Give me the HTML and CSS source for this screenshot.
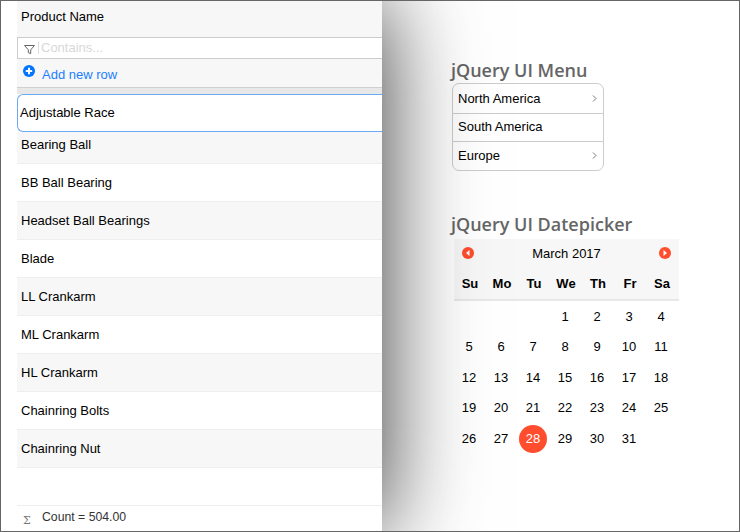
FILE: index.html
```html
<!DOCTYPE html>
<html lang="en">
<head>
<meta charset="utf-8">
<title>Components</title>
<link rel="stylesheet" href="styles.css">
</head>
<body>
<div class="window">
  <section class="panel">
    <div class="grid">
      <div class="grid-head">
        <div class="head-title">Product Name</div>
        <div class="filter">
          <svg class="filter-icon" width="11" height="11" viewBox="0 0 11 11"><path d="M0.5 1.5h10L6.7 5.8v3.9L4.3 8.6V5.8z" fill="#fff" stroke="#666" stroke-width="1"/></svg>
          <span class="filter-sep"></span>
          <span class="filter-text">Contains...</span>
        </div>
        <div class="add-row">
          <svg class="add-icon" width="12" height="12" viewBox="0 0 12 12"><circle cx="6" cy="6" r="6" fill="#0075ff"/><path d="M2.8 6h6.4M6 2.8v6.4" stroke="#fff" stroke-width="2"/></svg>
          <span class="add-text">Add new row</span>
        </div>
      </div>
      <div class="grid-gap"></div>
      <div class="grid-body">
        <div class="row selected">Adjustable Race</div>
        <div class="row alt first">Bearing Ball</div>
        <div class="row">BB Ball Bearing</div>
        <div class="row alt">Headset Ball Bearings</div>
        <div class="row">Blade</div>
        <div class="row alt">LL Crankarm</div>
        <div class="row">ML Crankarm</div>
        <div class="row alt">HL Crankarm</div>
        <div class="row">Chainring Bolts</div>
        <div class="row alt">Chainring Nut</div>
      </div>
      <div class="grid-foot">
        <span class="sigma">Σ</span>
        <span class="count">Count = 504.00</span>
      </div>
    </div>
  </section>
  <main class="side">
    <h2 class="title menu-title">jQuery UI Menu</h2>
    <ul class="menu">
      <li class="menu-item"><span>North America</span><svg width="5" height="7" viewBox="0 0 5 7"><path d="M1 .5l3 3-3 3" fill="none" stroke="#777"/></svg></li>
      <li class="menu-item"><span>South America</span></li>
      <li class="menu-item"><span>Europe</span><svg width="5" height="7" viewBox="0 0 5 7"><path d="M1 .5l3 3-3 3" fill="none" stroke="#777"/></svg></li>
    </ul>
    <h2 class="title date-title">jQuery UI Datepicker</h2>
    <div class="picker">
      <div class="picker-head">
        <div class="picker-nav">
          <svg width="12" height="12" viewBox="0 0 12 12"><circle cx="6" cy="6" r="6" fill="#ff4d2e"/><path d="M7.5 3v6L4 6z" fill="#fff"/></svg>
          <span class="month">March 2017</span>
          <svg width="12" height="12" viewBox="0 0 12 12"><circle cx="6" cy="6" r="6" fill="#ff4d2e"/><path d="M4.5 3v6L8 6z" fill="#fff"/></svg>
        </div>
        <div class="weekdays">
          <span>Su</span><span>Mo</span><span>Tu</span><span>We</span><span>Th</span><span>Fr</span><span>Sa</span>
        </div>
      </div>
      <div class="days">
        <span></span><span></span><span></span><span>1</span><span>2</span><span>3</span><span>4</span>
        <span>5</span><span>6</span><span>7</span><span>8</span><span>9</span><span>10</span><span>11</span>
        <span>12</span><span>13</span><span>14</span><span>15</span><span>16</span><span>17</span><span>18</span>
        <span>19</span><span>20</span><span>21</span><span>22</span><span>23</span><span>24</span><span>25</span>
        <span>26</span><span>27</span><span class="today">28</span><span>29</span><span>30</span><span>31</span><span></span>
      </div>
    </div>
  </main>
</div>
</body>
</html>
```
FILE: styles.css
```css
* { box-sizing: border-box; }
html, body { margin: 0; padding: 0; }
body { font-family: "Liberation Sans", Arial, sans-serif; font-size: 13px; color: #000; background: #fff; }
.window { width: 740px; height: 532px; border: 1px solid #666; display: flex; overflow: hidden; background: #fff; }
.panel { width: 381px; flex: none; padding-left: 16px; background: #fff; box-shadow: 0 0 90px rgba(0,0,0,.8); position: relative; z-index: 1; }
.grid { height: 100%; display: flex; flex-direction: column; }
.grid-head { background: #f7f7f7; height: 87px; border-bottom: 1px solid #d0d0d0; }
.head-title { height: 36px; padding: 8px 4px 0; line-height: 16px; }
.filter { height: 22px; border: 1px solid #ccc; border-right: 0; background: #fff; display: flex; align-items: center; }
.filter-icon { margin: 2px 0 0 6px; }
.filter-sep { width: 1px; height: 12px; background: #ddd; margin-left: 3px; }
.filter-text { color: #d8d8d8; margin: -2px 0 0 2px; }
.add-row { display: flex; height: 28px; padding: 6px 0 0 6px; }
.add-icon { flex: none; }
.add-text { color: #1a80ff; margin-left: 7px; line-height: 19px; }
.grid-gap { height: 6px; background: #e8e8e8; flex: none; }
.grid-body { flex: 1; min-height: 0; }
.row { height: 38px; padding: 11px 4px 0; line-height: 16px; border-bottom: 1px solid #eee; }
.alt { background: #f7f7f7; }
.first { height: 32px; padding-top: 5px; }
.selected { height: 38px; padding: 10px 2px 0; background: #fff; border: 1px solid #6aa9f4; border-right: 0; border-radius: 6px 0 0 6px; }
.grid-foot { height: 26px; flex: none; border-top: 1px solid #eee; display: flex; align-items: center; padding-left: 6px; }
.sigma { color: #777; font-family: "DejaVu Serif", serif; font-size: 11px; width: 19px; margin-top: 3px; }
.count { color: #333; font-size: 12.25px; margin-top: -4px; }
.side { flex: 1; position: relative; padding: 57px 0 0 69px; }
.title { font-family: "Open Sans", sans-serif; font-weight: 600; font-size: 18px; line-height: 24px; color: #666; margin: 0; }
.menu { list-style: none; margin: 1px 0 0 1px; padding: 0; width: 152px; height: 88px; border: 1px solid #ccc; border-radius: 7px; }
.menu-item { height: 30px; padding: 0 6px 0 5px; display: flex; justify-content: space-between; align-items: center; border-bottom: 1px solid #ccc; }
.menu-item:nth-child(2) { height: 28px; padding-bottom: 2px; }
.menu-item:nth-child(3) { border-bottom: 0; height: 28px; padding-bottom: 2px; }
.date-title { margin-top: 41px; }
.picker { margin: 3px 0 0 3px; width: 225px; }
.picker-head { height: 62px; background: #f7f7f7; border-bottom: 2px solid #e8e8e8; }
.picker-nav { display: flex; justify-content: space-between; align-items: center; height: 28px; padding: 0 8px; }
.weekdays { display: grid; grid-template-columns: repeat(7, 32px); font-weight: 700; text-align: center; line-height: 16px; padding-top: 9px; }
.days { display: grid; grid-template-columns: repeat(7, 32px); grid-auto-rows: 30.4px; text-align: center; line-height: 30px; margin: 1px 0 0 -1px; }
.today { width: 28px; height: 28px; margin: 1px auto 0; line-height: 28px; border-radius: 50%; background: #ff4d2e; color: #fff; }
```
